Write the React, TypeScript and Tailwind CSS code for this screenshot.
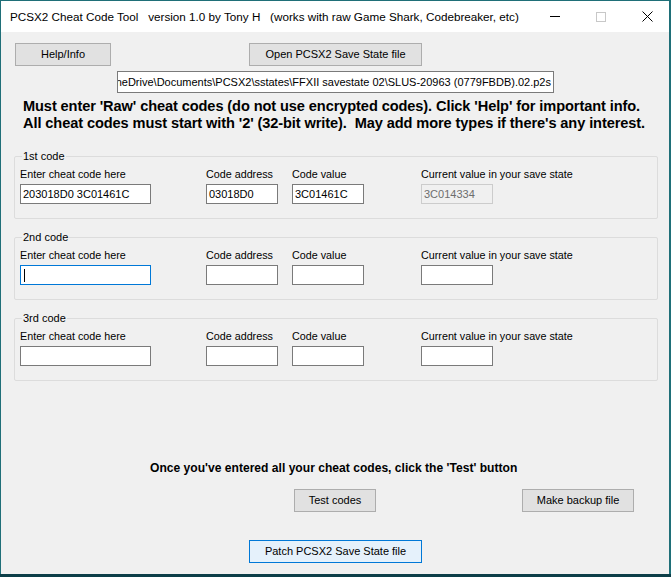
import React from "react";

const F = { fontFamily: '"Liberation Sans", Arial, sans-serif' };

function Btn({ w, label, primary }: { w: string; label: string; primary?: boolean }) {
  return (
    <div
      className={`${w} h-[23px] flex items-center justify-center text-[11px] text-black border ${
        primary ? "bg-[#e5f1fb] border-[#0078d7]" : "bg-[#e1e1e1] border-[#adadad]"
      }`}
    >
      {label}
    </div>
  );
}

function Box({ w, value, focused, disabled }: { w: string; value?: string; focused?: boolean; disabled?: boolean }) {
  return (
    <div
      className={`${w} h-[20px] border flex items-center pl-[2px] text-[11px] whitespace-nowrap overflow-hidden ${
        disabled
          ? "border-[#cccccc] bg-[#f0f0f0] text-[#6d6d6d]"
          : focused
          ? "border-[#0078d7] bg-white text-black"
          : "border-[#7a7a7a] bg-white text-black"
      }`}
    >
      {focused ? <div className="w-px h-[13px] bg-black ml-px" /> : value}
    </div>
  );
}

function Group({
  title,
  code,
  addr,
  val,
  cur,
  focused,
  first,
}: {
  title: string;
  code?: string;
  addr?: string;
  val?: string;
  cur?: string;
  focused?: boolean;
  first?: boolean;
}) {
  return (
    <fieldset
      className={`ml-[13px] w-[644px] border border-[#dcdcdc] rounded-[2px] px-[5px] pb-[14px] ${
        first ? "mt-[18px]" : "mt-[12px]"
      }`}
    >
      <legend className="ml-[2px] px-[1px] text-[11px] leading-[13px] text-black">{title}</legend>
      <div className="flex mt-[5px] text-[10.75px] leading-[13px] text-black whitespace-nowrap">
        <div className="w-[186px]">Enter cheat code here</div>
        <div className="w-[86px]">Code address</div>
        <div className="w-[129px]">Code value</div>
        <div>Current value in your save state</div>
      </div>
      <div className="flex mt-[3px]">
        <Box w="w-[131px]" value={code} focused={focused} />
        <div className="w-[55px]" />
        <Box w="w-[72px]" value={addr} />
        <div className="w-[14px]" />
        <Box w="w-[72px]" value={val} />
        <div className="w-[57px]" />
        <Box w="w-[72px]" value={cur} disabled={!!cur} />
      </div>
    </fieldset>
  );
}

export default function App() {
  return (
    <div className="w-[671px] h-[577px] bg-[#0c3e48] overflow-hidden" style={F}>
      <div className="flex">
        <div className="w-px bg-[#1f6f78]" />
        <div className="w-[668px] h-[574px] flex flex-col bg-[#f0f0f0] border-t border-[#1f6f78]">
          {/* title bar */}
          <div className="h-[31px] bg-white flex items-center">
            <div className="ml-[9px] text-[11.7px] text-black whitespace-pre flex-1 min-w-0 overflow-hidden">
              {"PCSX2 Cheat Code Tool   version 1.0 by Tony H   (works with raw Game Shark, Codebreaker, etc)"}
            </div>
            <div className="flex items-center mr-[-1px]">
              <div className="w-[46px] h-[31px] flex items-center justify-center">
                <div className="w-[10px] h-px bg-black" />
              </div>
              <div className="w-[46px] h-[31px] flex items-center justify-center">
                <div className="w-[10px] h-[10px] border border-[#c8c8c8]" />
              </div>
              <div className="w-[46px] h-[31px] flex items-center justify-center">
                <svg width="11" height="11" viewBox="0 0 11 11">
                  <path d="M0.5 0.5 L10.5 10.5 M10.5 0.5 L0.5 10.5" stroke="#000" strokeWidth="1" fill="none" />
                </svg>
              </div>
            </div>
          </div>

          {/* row 1 buttons */}
          <div className="flex mt-[11px] pl-[14px]">
            <Btn w="w-[96px]" label="Help/Info" />
            <div className="w-[138px]" />
            <Btn w="w-[173px]" label="Open PCSX2 Save State file" />
          </div>

          {/* path box */}
          <div className="ml-[116px] mt-[5px] w-[437px] h-[22px] border border-[#7a7a7a] bg-white flex items-center justify-end overflow-hidden whitespace-nowrap text-[11px] text-black pr-[2px]">
            <span>{"C:\\Users\\Tony\\OneDrive\\Documents\\PCSX2\\sstates\\FFXII savestate 02\\SLUS-20963 (0779FBDB).02.p2s"}</span>
          </div>

          {/* bold info */}
          <div className="mt-[5px] pl-[22px] text-[14.6px] leading-[17px] font-bold text-black whitespace-nowrap tracking-[-0.1px]">
            <div>Must enter 'Raw' cheat codes (do not use encrypted codes). Click 'Help' for important info.</div>
            <div className="whitespace-pre">All cheat codes must start with '2' (32-bit write).  May add more types if there's any interest.</div>
          </div>

          <Group title="1st code" code="203018D0 3C01461C" addr="03018D0" val="3C01461C" cur="3C014334" first />
          <Group title="2nd code" focused />
          <Group title="3rd code" />

          <div className="mt-[81px] pl-[149px] text-[12.1px] leading-[13px] font-bold text-black whitespace-nowrap">
            Once you've entered all your cheat codes, click the 'Test' button
          </div>

          <div className="flex mt-[14px] pl-[293px]">
            <Btn w="w-[82px]" label="Test codes" />
            <div className="w-[146px]" />
            <Btn w="w-[112px]" label="Make backup file" />
          </div>

          <div className="mt-[28px] pl-[248px]">
            <Btn w="w-[173px]" label="Patch PCSX2 Save State file" primary />
          </div>
        </div>
        <div className="w-[2px] bg-[#1f6f78]" />
      </div>
    </div>
  );
}
